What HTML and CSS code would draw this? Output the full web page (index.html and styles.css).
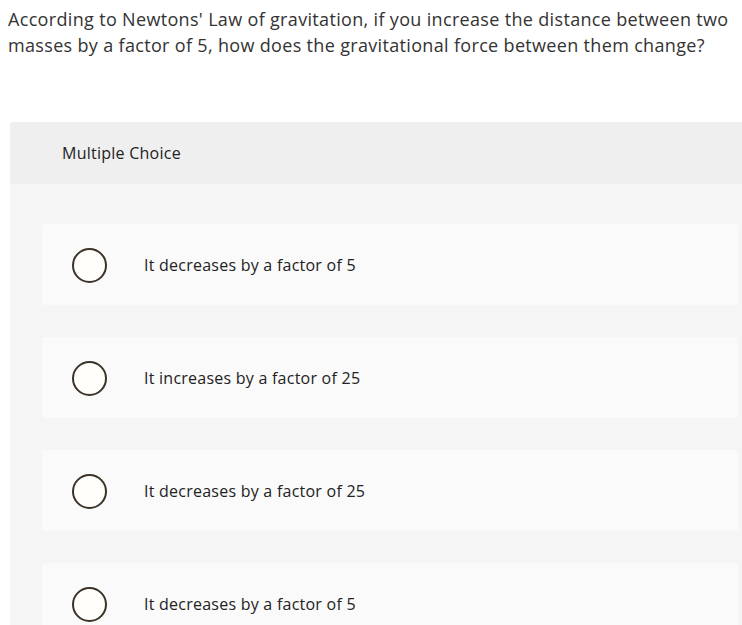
FILE: index.html
```html
<!DOCTYPE html>
<html>
<head>
<meta charset="utf-8">
<link rel="stylesheet" href="styles.css">
</head>
<body>
<p class="question">According to Newtons' Law of gravitation, if you increase the distance between two masses by a factor of 5, how does the gravitational force between them change?</p>
<div class="mc">
  <div class="mc-head">Multiple Choice</div>
  <div class="mc-body">
    <div class="opt"><span class="radio"></span><span class="label">It decreases by a factor of 5</span></div>
    <div class="opt"><span class="radio"></span><span class="label">It increases by a factor of 25</span></div>
    <div class="opt"><span class="radio"></span><span class="label">It decreases by a factor of 25</span></div>
    <div class="opt"><span class="radio"></span><span class="label">It decreases by a factor of 5</span></div>
  </div>
</div>
</body>
</html>
```
FILE: styles.css
```css
html, body {
  margin: 0;
  padding: 0;
  background: #ffffff;
  overflow: hidden;
}
body {
  font-family: "Open Sans", Lato, sans-serif;
  color: #2a2a2a;
}
.question {
  margin: 0;
  padding: 6px 0 0 8px;
  font-size: 18px;
  letter-spacing: 0.33px;
  line-height: 26px;
  color: #333333;
}
.mc {
  margin: 64px 0 0 10px;
  background: #f5f5f5;
  border-radius: 3px 0 0 0;
}
.mc-head {
  height: 62px;
  display: flex;
  align-items: center;
  padding-left: 52px;
  background: #efefef;
  font-size: 16px;
  letter-spacing: 0.25px;
  color: #222222;
  border-radius: 3px 0 0 0;
}
.mc-body {
  padding: 40px 4px 40px 32px;
  display: flex;
  flex-direction: column;
  gap: 32px;
}
.opt {
  height: 81px;
  background: #fafafa;
  border-radius: 3px;
  display: flex;
  align-items: center;
  padding-left: 30px;
}
.radio {
  width: 31px;
  height: 31px;
  border: 2px solid #3b3327;
  border-radius: 50%;
  background: #fffefb;
  flex: none;
  margin-top: 2px;
}
.label {
  margin-left: 37px;
  font-size: 16px;
  letter-spacing: 0.24px;
  color: #222222;
}
```
